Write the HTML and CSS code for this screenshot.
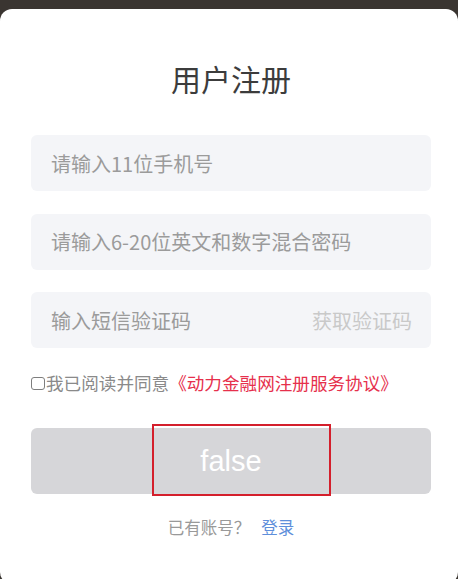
FILE: index.html
```html
<!DOCTYPE html>
<html lang="zh-CN">
<head>
<meta charset="utf-8">
<title>用户注册</title>
<link rel="stylesheet" href="styles.css">
</head>
<body>
<div class="card">
  <h1 class="title">用户注册</h1>
  <form class="form">
    <div class="field"><input class="field-input" type="text" placeholder="请输入11位手机号"></div>
    <div class="field"><input class="field-input" type="password" placeholder="请输入6-20位英文和数字混合密码"></div>
    <div class="field field-code">
      <input class="field-input" type="text" placeholder="输入短信验证码">
      <span class="get-code">获取验证码</span>
    </div>
    <label class="agree">
      <input class="agree-box" type="checkbox">
      <span class="agree-text">我已阅读并同意</span><span class="agree-link">《动力金融网注册服务协议》</span>
    </label>
    <div class="submit-wrap">
      <button class="submit" type="button">false</button>
      <span class="debug-outline"></span>
    </div>
    <p class="login-line"><span class="login-hint">已有账号？</span><a class="login-link" href="#">登录</a></p>
  </form>
</div>
</body>
</html>
```
FILE: styles.css
```css
html, body {
  margin: 0;
  padding: 0;
  height: 100%;
  overflow: hidden;
}
body {
  background: #3a3531;
  font-family: "Noto Sans CJK SC", sans-serif;
}
.card {
  margin-top: 9px;
  width: 458px;
  height: 575px;
  box-sizing: border-box;
  background: #ffffff;
  border-radius: 12px;
  padding: 54px 27px 0 31px;
}
.title {
  margin: 0;
  font-size: 30px;
  line-height: 30px;
  font-weight: 400;
  color: #3c3c3c;
  text-align: center;
}
.form {
  margin-top: 42px;
  display: flex;
  flex-direction: column;
}
.field {
  height: 56px;
  background: #f4f5f8;
  border-radius: 6px;
  display: flex;
  align-items: center;
  padding: 0 19px 0 20px;
  margin-bottom: 22.5px;
}
.field-input {
  flex: 1;
  min-width: 0;
  border: none;
  outline: none;
  background: transparent;
  padding: 0;
  font-family: "Noto Sans CJK SC", sans-serif;
  font-size: 20px;
  color: #333;
}
.field-input::placeholder {
  color: #9b9b9b;
}
.get-code {
  font-size: 20px;
  color: #c9c9c9;
}
.agree {
  display: flex;
  align-items: center;
  margin-top: 2.5px;
  height: 20px;
  font-size: 17.6px;
  line-height: 20px;
}
.agree-box {
  appearance: none;
  -webkit-appearance: none;
  width: 14px;
  height: 13px;
  margin: 0 1px 0 0;
  border: 1.5px solid #7e7e7e;
  border-radius: 3px;
  box-sizing: border-box;
}
.agree-text {
  color: #8a8a8a;
}
.agree-link {
  color: #e6304c;
}
.submit-wrap {
  position: relative;
  margin-top: 35px;
}
.submit {
  display: block;
  width: 100%;
  height: 66px;
  border: none;
  border-radius: 6px;
  background: #d6d6d9;
  color: #ffffff;
  font-family: "Liberation Sans", Arial, sans-serif;
  font-size: 29px;
  padding: 0;
}
.debug-outline {
  position: absolute;
  left: 121px;
  top: -4px;
  width: 179px;
  height: 72px;
  box-sizing: border-box;
  border: 2px solid #d41f2c;
}
.login-line {
  margin: 23px 0 0;
  text-align: center;
  font-size: 16.5px;
  line-height: 20px;
}
.login-hint {
  color: #999999;
}
.login-link {
  margin-left: 11px;
  color: #5f8fdb;
  text-decoration: none;
}
```
